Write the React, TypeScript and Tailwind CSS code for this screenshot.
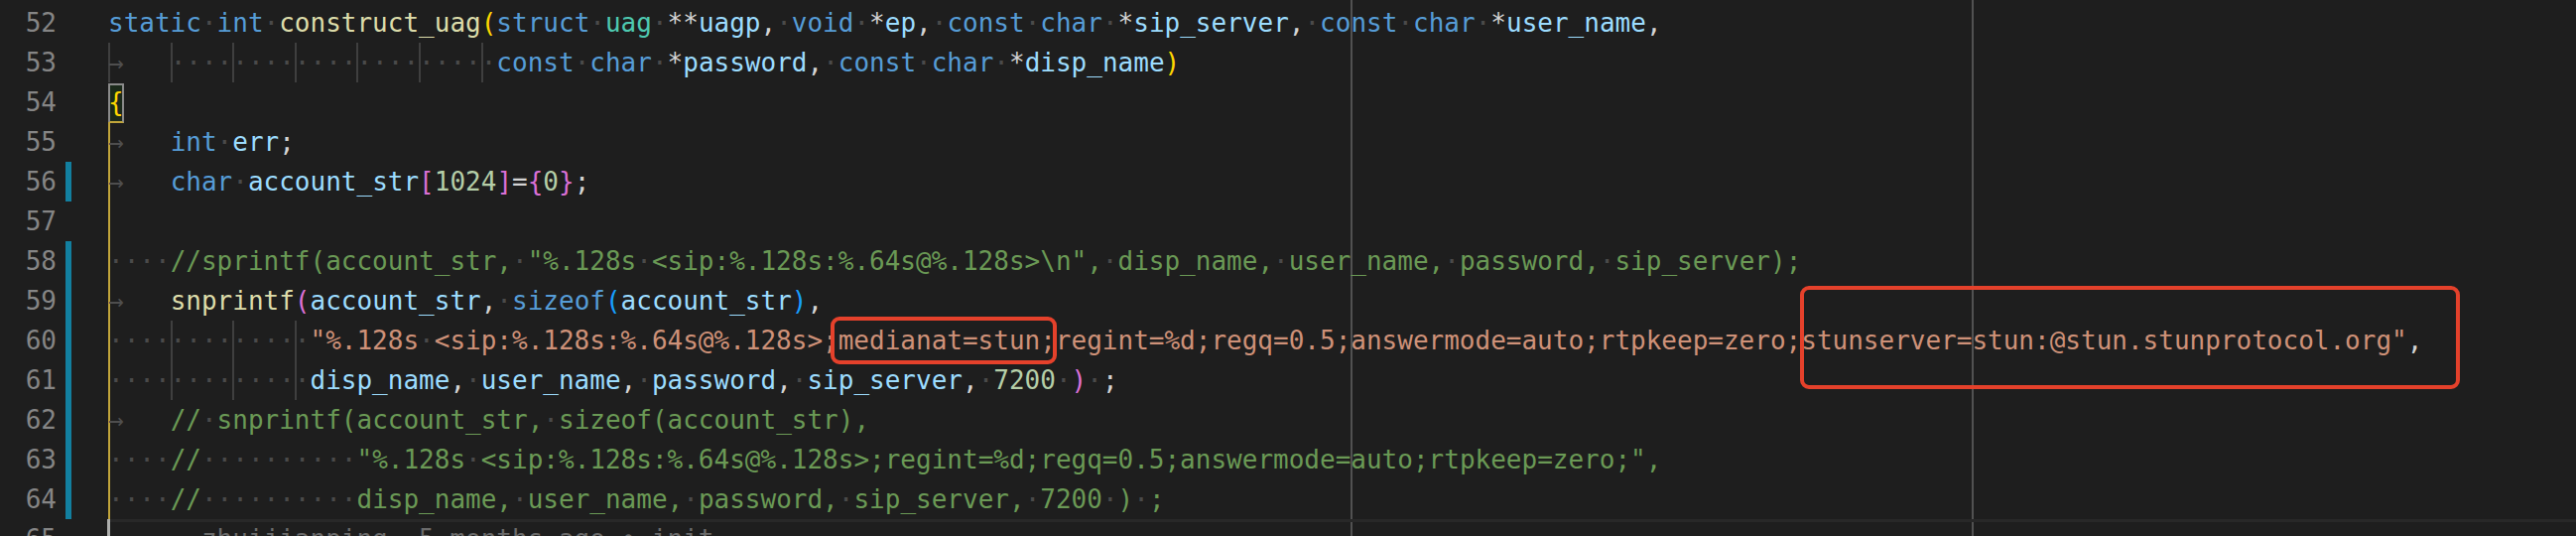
import React from "react";

// colours (VS Code Dark+)
const K = "text-[#569cd6]"; // keyword
const F = "text-[#dcdcaa]"; // function
const T = "text-[#4ec9b0]"; // type
const V = "text-[#9cdcfe]"; // variable
const P = "text-[#d4d4d4]"; // punctuation
const S = "text-[#ce9178]"; // string
const N = "text-[#b5cea8]"; // number
const C = "text-[#6a9955]"; // comment
const B1 = "text-[#ffd700]";
const B2 = "text-[#da70d6]";
const B3 = "text-[#179fff]";

const CW = 15.653; // one column at 26px DejaVu Sans Mono

type Tok = [string, string];
type Guide = { col: number; gold?: boolean };
type Line = { n: number; mod?: boolean; guides?: Guide[]; toks: Tok[] };

const gold: Guide = { col: 0, gold: true };

const lines: Line[] = [
  {
    n: 52,
    toks: [
      [K, "static "], [K, "int "], [F, "construct_uag"], [B1, "("], [K, "struct "], [T, "uag "],
      [P, "**"], [V, "uagp"], [P, ", "], [K, "void "], [P, "*"], [V, "ep"], [P, ", "],
      [K, "const "], [K, "char "], [P, "*"], [V, "sip_server"], [P, ", "],
      [K, "const "], [K, "char "], [P, "*"], [V, "user_name"], [P, ","],
    ],
  },
  {
    n: 53,
    guides: [{ col: 0 }, { col: 4 }, { col: 8 }, { col: 12 }, { col: 16 }, { col: 20 }, { col: 24 }],
    toks: [
      [P, "\t                     "], [K, "const "], [K, "char "], [P, "*"], [V, "password"], [P, ", "],
      [K, "const "], [K, "char "], [P, "*"], [V, "disp_name"], [B1, ")"],
    ],
  },
  { n: 54, toks: [[B1, "{"]] },
  { n: 55, guides: [gold], toks: [[P, "\t"], [K, "int "], [V, "err"], [P, ";"]] },
  {
    n: 56,
    mod: true,
    guides: [gold],
    toks: [
      [P, "\t"], [K, "char "], [V, "account_str"], [B2, "["], [N, "1024"], [B2, "]"], [P, "="],
      [B2, "{"], [N, "0"], [B2, "}"], [P, ";"],
    ],
  },
  { n: 57, guides: [gold], toks: [] },
  {
    n: 58,
    mod: true,
    guides: [gold],
    toks: [
      [P, "    "],
      [C, '//sprintf(account_str, "%.128s <sip:%.128s:%.64s@%.128s>\\n", disp_name, user_name, password, sip_server);'],
    ],
  },
  {
    n: 59,
    mod: true,
    guides: [gold],
    toks: [
      [P, "\t"], [F, "snprintf"], [B2, "("], [V, "account_str"], [P, ", "], [K, "sizeof"],
      [B3, "("], [V, "account_str"], [B3, ")"], [P, ","],
    ],
  },
  {
    n: 60,
    mod: true,
    guides: [gold, { col: 4 }, { col: 8 }, { col: 12 }],
    toks: [
      [P, "             "],
      [S, '"%.128s <sip:%.128s:%.64s@%.128s>;medianat=stun;regint=%d;regq=0.5;answermode=auto;rtpkeep=zero;stunserver=stun:@stun.stunprotocol.org"'],
      [P, ","],
    ],
  },
  {
    n: 61,
    mod: true,
    guides: [gold, { col: 4 }, { col: 8 }, { col: 12 }],
    toks: [
      [P, "             "], [V, "disp_name"], [P, ", "], [V, "user_name"], [P, ", "], [V, "password"],
      [P, ", "], [V, "sip_server"], [P, ", "], [N, "7200"], [P, " "], [B2, ")"], [P, " ;"],
    ],
  },
  {
    n: 62,
    mod: true,
    guides: [gold],
    toks: [[P, "\t"], [C, "// snprintf(account_str, sizeof(account_str),"]],
  },
  {
    n: 63,
    mod: true,
    guides: [gold],
    toks: [
      [P, "    "],
      [C, '//          "%.128s <sip:%.128s:%.64s@%.128s>;regint=%d;regq=0.5;answermode=auto;rtpkeep=zero;",'],
    ],
  },
  {
    n: 64,
    mod: true,
    guides: [gold],
    toks: [[P, "    "], [C, "//          disp_name, user_name, password, sip_server, 7200 ) ;"]],
  },
];

function Tokens({ toks }: { toks: Tok[] }) {
  const out: React.ReactNode[] = [];
  toks.forEach(([cls, text], i) => {
    text.split(/( +|\t)/).forEach((part, j) => {
      if (!part) return;
      const key = `${i}-${j}`;
      if (part === "\t") {
        out.push(
          <span key={key} className="text-[#4e4e4e]">
            {"\u2192   "}
          </span>
        );
      } else if (part[0] === " ") {
        out.push(
          <span key={key} className="text-[#4a4a4a]">
            {"\u00b7".repeat(part.length)}
          </span>
        );
      } else {
        out.push(
          <span key={key} className={cls}>
            {part}
          </span>
        );
      }
    });
  });
  return <>{out}</>;
}

function Row({ line }: { line: Line }) {
  return (
    <div className="relative flex h-[40px]">
      <div className="w-[57px] shrink-0 text-right text-[#858585]">{line.n}</div>
      <div className="w-[9px] shrink-0" />
      <div className={line.mod ? "w-[6px] shrink-0 bg-[#127f9f]" : "w-[6px] shrink-0"} />
      <div className="w-[37px] shrink-0" />
      <div className="relative flex-1 whitespace-pre">
        {(line.guides || []).map((g) => (
          <div
            key={g.col}
            className={g.gold ? "absolute top-0 bottom-0 w-[2px] bg-[#c2a53a]" : "absolute top-0 bottom-0 w-[2px] bg-[#3f3f3f]"}
            style={{ left: Math.round(g.col * CW) }}
          />
        ))}
        {line.n === 54 && (
          <div className="absolute top-[1px] left-0 h-[40px] w-[16px] border-2 border-[#8a8a8a] border-b-[#c2a53a] bg-[#1b2a1b]" />
        )}
        <div className="relative">
          <Tokens toks={line.toks} />
        </div>
      </div>
    </div>
  );
}

export default function App() {
  return (
    <div className="relative h-[540px] w-[2596px] overflow-hidden bg-[#1e1e1e] pt-[3px] font-['DejaVu_Sans_Mono',monospace] text-[26px] leading-[40px]">
      {/* rulers at 80 / 120 */}
      <div className="absolute top-0 left-[1361px] h-full w-[2px] bg-[#515151]" />
      <div className="absolute top-0 left-[1987px] h-full w-[2px] bg-[#515151]" />

      {lines.map((l) => (
        <Row key={l.n} line={l} />
      ))}

      {/* current line 65 with blame */}
      <div className="relative flex h-[40px]">
        <div className="w-[57px] shrink-0 text-right text-[#858585]">65</div>
        <div className="w-[52px] shrink-0" />
        <div className="relative flex-1 whitespace-pre border-t-[3px] border-[#282828]">
          <div className="absolute -top-[3px] left-[-1px] h-[43px] w-[3px] bg-[#aeafad]" />
          <span className="relative top-[-3px] text-[#6b6b6b]">{"      zhuijianping, 5 months ago \u2022 init"}</span>
        </div>
      </div>

      {/* annotation boxes */}
      <div className="absolute top-[319px] left-[837px] h-[48px] w-[228px] rounded-[9px] border-4 border-[#e5412b]" />
      <div className="absolute top-[288px] left-[1814px] h-[104px] w-[665px] rounded-[9px] border-4 border-[#e5412b]" />
    </div>
  );
}
